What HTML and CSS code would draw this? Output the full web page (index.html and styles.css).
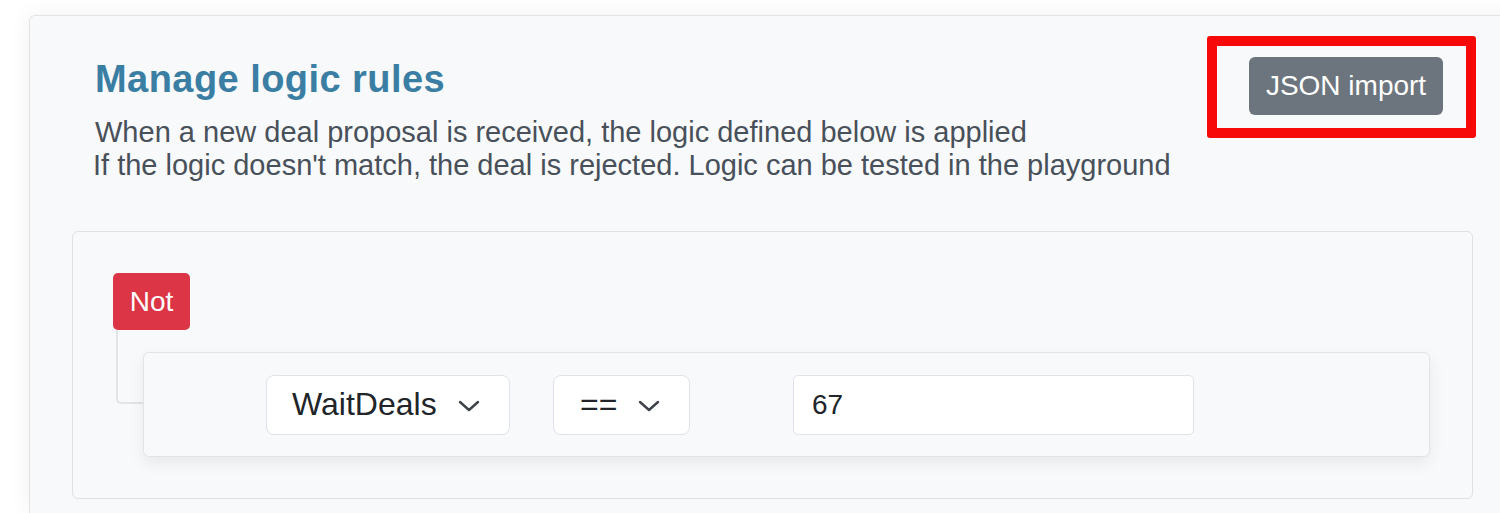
FILE: index.html
```html
<!DOCTYPE html>
<html lang="en">
<head>
<meta charset="utf-8">
<title>Manage logic rules</title>
<link rel="stylesheet" href="styles.css">
</head>
<body>
<div class="card">
  <div class="header">
    <div class="intro">
      <h2 class="title">Manage logic rules</h2>
      <div class="desc">
        <div class="desc-line first">When a new deal proposal is received, the logic defined below is applied</div>
        <div class="desc-line">If the logic doesn't match, the deal is rejected. Logic can be tested in the playground</div>
      </div>
    </div>
    <div class="import-wrap">
      <button class="btn-import" type="button">JSON import</button>
      <span class="highlight"></span>
    </div>
  </div>

  <div class="group">
    <div class="badge-not">Not</div>
    <div class="children">
      <div class="rule">
        <div class="select field-select">
          <span class="select-text">WaitDeals</span>
          <svg class="chev" width="22" height="12" viewBox="0 0 22 12"><path d="M2 2 L11 10 L20 2" fill="none" stroke="#3d4349" stroke-width="2.4" stroke-linecap="round" stroke-linejoin="round"/></svg>
        </div>
        <div class="select op-select">
          <span class="select-text">==</span>
          <svg class="chev" width="22" height="12" viewBox="0 0 22 12"><path d="M2 2 L11 10 L20 2" fill="none" stroke="#3d4349" stroke-width="2.4" stroke-linecap="round" stroke-linejoin="round"/></svg>
        </div>
        <div class="value-input">67</div>
      </div>
    </div>
  </div>
</div>
</body>
</html>
```

FILE: styles.css
```css
html, body {
  margin: 0;
  padding: 0;
  background: #ffffff;
  overflow: hidden;
  width: 1500px;
  height: 513px;
}

body {
  font-family: "Liberation Sans", Arial, sans-serif;
}

.card {
  box-sizing: border-box;
  margin: 15px 0 0 29px;
  width: 1500px;
  height: 498px;
  background: #f8f9fa;
  border: 1px solid #e2e3e5;
  border-bottom: none;
  border-radius: 6px 6px 0 0;
  box-shadow: 0 0 22px rgba(0, 0, 0, 0.06);
}

.header {
  display: flex;
  justify-content: space-between;
  align-items: flex-start;
  padding: 40px 85px 0 65px;
}

.title {
  margin: 0;
  font-size: 38px;
  line-height: 46px;
  font-weight: bold;
  letter-spacing: 0.45px;
  color: #3b7ea3;
}

.desc {
  margin: 14px 0 0 -2px;
  color: #48505a;
  font-size: 29px;
  line-height: 33px;
}

.desc-line.first {
  padding-left: 2px;
}

.import-wrap {
  position: relative;
  margin-top: 1px;
}

.btn-import {
  display: block;
  box-sizing: border-box;
  width: 194px;
  height: 58px;
  padding: 0;
  border: none;
  border-radius: 6px;
  background: #6c757d;
  color: #ffffff;
  font-family: "Liberation Sans", Arial, sans-serif;
  font-size: 28px;
  line-height: 58px;
  text-align: center;
}

.highlight {
  position: absolute;
  box-sizing: border-box;
  left: -42px;
  top: -21px;
  width: 269px;
  height: 102px;
  border: 10px solid #f70909;
  border-radius: 3px;
}

.group {
  box-sizing: border-box;
  margin: 49px 0 0 42px;
  width: 1401px;
  height: 268px;
  padding: 41px 42px 0 40px;
  background: #f8f9fa;
  border: 1px solid #dfe1e4;
  border-radius: 6px;
}

.badge-not {
  box-sizing: border-box;
  width: 77px;
  height: 57px;
  background: #dc3545;
  color: #ffffff;
  border-radius: 5px;
  font-size: 28px;
  line-height: 57px;
  text-align: center;
}

.children {
  position: relative;
  margin-top: 22px;
  padding-left: 30px;
}

.children::before {
  content: "";
  position: absolute;
  left: 3px;
  top: -22px;
  width: 28px;
  height: 74px;
  border-left: 2px solid #e3e4e6;
  border-bottom: 2px solid #e3e4e6;
  border-bottom-left-radius: 5px;
  box-sizing: border-box;
}

.rule {
  position: relative;
  box-sizing: border-box;
  height: 105px;
  display: flex;
  align-items: center;
  padding-left: 122px;
  background: #f8f9fa;
  border: 1px solid #e1e3e6;
  border-radius: 6px;
  box-shadow: 0 6px 16px rgba(0, 0, 0, 0.07);
}

.select {
  box-sizing: border-box;
  height: 60px;
  display: flex;
  align-items: center;
  justify-content: space-between;
  background: #ffffff;
  border: 1px solid #dfe2e6;
  border-radius: 8px;
  color: #212529;
  font-size: 32px;
}

.field-select {
  width: 244px;
  padding: 0 29px 0 25px;
}

.op-select {
  width: 137px;
  margin-left: 43px;
  padding: 0 29px 0 26px;
}

.chev {
  display: block;
  margin-top: 2px;
}

.value-input {
  box-sizing: border-box;
  width: 401px;
  height: 60px;
  margin-left: 103px;
  padding-left: 18px;
  background: #ffffff;
  border: 1px solid #dfe2e6;
  border-radius: 5px;
  color: #212529;
  font-size: 28px;
  line-height: 58px;
}
```
